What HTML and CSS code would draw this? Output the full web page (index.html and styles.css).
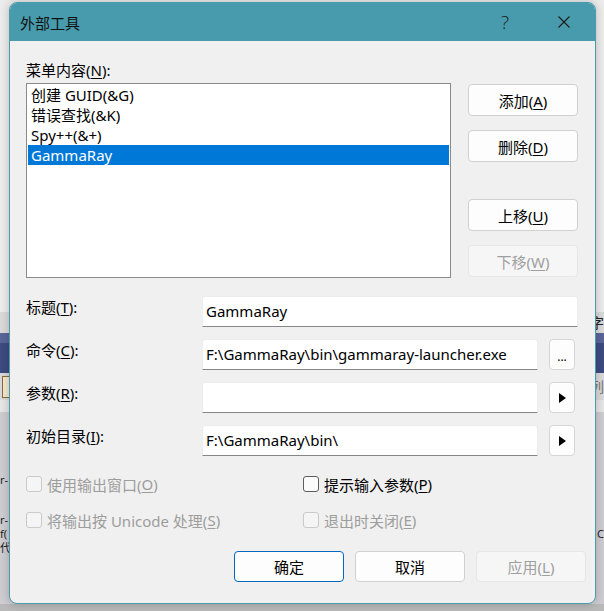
FILE: index.html
```html
<!DOCTYPE html>
<html>

<head>
	<meta charset="utf-8">
	<title>外部工具</title>
	<meta name="viewport" content="width=device-width, initial-scale=1">
	<link rel="stylesheet" href="styles.css">
</head>

<body>
	<!-- the IDE window behind the dialog -->
	<div class='desk'>
		<div class='band band--top'></div>
		<div class='band band--tab'><span></span><span class='frag'>字</span></div>
		<div class='band band--bar-light'></div>
		<div class='band band--bar'></div>
		<div class='band band--tool'><span class='icon'></span><span class='frag frag--grey'>列</span></div>
		<div class='band band--rule'></div>
		<div class='band band--code'>
			<div class='line line--wide'><span class='frag'>r-</span><span></span></div>
			<div class='line'><span class='frag'>r-</span><span></span></div>
			<div class='line'><span class='frag'>f(</span><span class='frag'>C</span></div>
			<div class='line'><span class='frag'>代</span><span></span></div>
		</div>
		<div class='band band--bottom'></div>
	</div>

	<div class='dialog'>
		<div class='titlebar'>
			<span class='titlebar__text'>外部工具</span>
			<span class='titlebar__help'>?</span>
			<span class='titlebar__close'>
				<svg width='12' height='12' viewBox='0 0 12 12'>
					<path d='M0.5 0.5 L11.5 11.5 M11.5 0.5 L0.5 11.5' stroke='#1b1b1b' stroke-width='1.1' fill='none' />
				</svg>
			</span>
		</div>

		<div class='dialog__body'>
			<div class='menu'>
				<div class='menu__main'>
					<p class='label'>菜单内容(<u>N</u>):</p>
					<ul class='list'>
						<li>创建 GUID(&amp;G)</li>
						<li>错误查找(&amp;K)</li>
						<li>Spy++(&amp;+)</li>
						<li class='is-selected'>GammaRay</li>
					</ul>
				</div>
				<div class='menu__side'>
					<button class='btn'>添加(<u>A</u>)</button>
					<button class='btn'>删除(<u>D</u>)</button>
					<button class='btn btn--gap'>上移(<u>U</u>)</button>
					<button class='btn' disabled>下移(<u>W</u>)</button>
				</div>
			</div>

			<div class='fields'>
				<div class='field'>
					<label class='field__label'>标题(<u>T</u>):</label>
					<div class='input'>GammaRay</div>
				</div>
				<div class='field'>
					<label class='field__label'>命令(<u>C</u>):</label>
					<div class='input'>F:\GammaRay\bin\gammaray-launcher.exe</div>
					<button class='mini mini--dots'>...</button>
				</div>
				<div class='field'>
					<label class='field__label'>参数(<u>R</u>):</label>
					<div class='input'></div>
					<button class='mini'>
						<svg width='7' height='10' viewBox='0 0 7 10'><polygon points='0,0 7,5 0,10' fill='#000' /></svg>
					</button>
				</div>
				<div class='field'>
					<label class='field__label'>初始目录(<u>I</u>):</label>
					<div class='input'>F:\GammaRay\bin\</div>
					<button class='mini'>
						<svg width='7' height='10' viewBox='0 0 7 10'><polygon points='0,0 7,5 0,10' fill='#000' /></svg>
					</button>
				</div>
			</div>

			<div class='checks'>
				<div class='check is-disabled'><span class='check__box'></span>使用输出窗口(<u>O</u>)</div>
				<div class='check'><span class='check__box'></span>提示输入参数(<u>P</u>)</div>
				<div class='check is-disabled'><span class='check__box'></span>将输出按 Unicode 处理(<u>S</u>)</div>
				<div class='check is-disabled'><span class='check__box'></span>退出时关闭(<u>E</u>)</div>
			</div>
		</div>

		<div class='dialog__footer'>
			<button class='btn btn--default'>确定</button>
			<button class='btn'>取消</button>
			<button class='btn' disabled>应用(<u>L</u>)</button>
		</div>
	</div>
</body>

</html>
```

FILE: styles.css
```css
/* page */

* {
	box-sizing: border-box;
}

html,
body {
	margin: 0;
	padding: 0;
}

body {
	position: relative;
	width: 604px;
	height: 611px;
	overflow: hidden;
	font-family: 'Noto Sans', 'Noto Sans CJK SC', sans-serif;
	font-size: 15px;
	color: #000;
	background: #ececec;
}

p,
ul {
	margin: 0;
	padding: 0;
}

u {
	text-decoration-thickness: 1px;
	text-underline-offset: 2px;
}

/* backdrop window */

.desk {
	display: flex;
	flex-direction: column;
	height: 611px;
}

.band {
	display: flex;
	justify-content: space-between;
	align-items: center;
	font-size: 14px;
	line-height: 1;
}

.band--top { height: 312px; background: #ececec; }
.band--tab { height: 21px; background: #dadada; }
.band--bar-light { height: 10px; background: #5a6699; }
.band--bar { height: 30px; background: #3c4b80; }
.band--tool { height: 27px; background: #d9d9d9; }
.band--rule { height: 12px; background: #e6e6e6; }
.band--bottom { height: 7px; background: #b9b9b9; }

.band--code {
	height: 192px;
	flex-direction: column;
	align-items: stretch;
	justify-content: flex-start;
	padding-top: 61px;
	font-size: 11px;
	background: #cdcdd1;
}

.line {
	display: flex;
	justify-content: space-between;
	height: 14px;
	line-height: 14px;
}

.line--wide {
	margin-bottom: 26px;
}

.frag {
	color: #222;
}

.frag--grey {
	color: #777;
}

.icon {
	width: 9px;
	height: 22px;
	margin-left: 2px;
	background: #f3e7cf;
	border: 1px solid #8a6a3a;
}

/* dialog */

.dialog {
	position: absolute;
	left: 9px;
	top: 2px;
	width: 587px;
	height: 602px;
	display: flex;
	flex-direction: column;
	background: #f0f0f0;
	border: 1px solid #4a9bae;
	border-radius: 8px;
	overflow: hidden;
	box-shadow: 0 0 10px rgba(0, 0, 0, 0.22);
}

.titlebar {
	display: flex;
	align-items: center;
	height: 38px;
	padding-left: 10px;
	background: #489bac;
	color: #111;
}

.titlebar__text {
	font-size: 15px;
}

.titlebar__help {
	margin-left: auto;
	width: 14px;
	font-family: 'Open Sans', sans-serif;
	font-size: 19px;
	font-weight: 300;
	color: #1b1b1b;
}

.titlebar__close {
	display: flex;
	margin: 0 25px 0 43px;
}

.dialog__body {
	padding: 19px 17px 0 16px;
}

/* menu list + side buttons */

.menu {
	display: flex;
}

.menu__main {
	width: 425px;
}

.label {
	line-height: 20px;
}

.list {
	list-style: none;
	height: 195px;
	margin-top: 3px;
	padding: 1px;
	background: #fff;
	border: 1px solid #8a8a8a;
}

.list li {
	height: 20px;
	line-height: 20px;
	padding-left: 3px;
	white-space: nowrap;
}

.list li.is-selected {
	background: #0078d7;
	color: #fff;
}

.menu__side {
	display: flex;
	flex-direction: column;
	gap: 14px;
	margin-left: auto;
	padding-top: 24px;
	width: 110px;
}

.btn {
	height: 32px;
	padding: 0;
	font-family: inherit;
	font-size: 15px;
	color: #000;
	background: #fdfdfd;
	border: 1px solid #d0d0d0;
	border-radius: 4px;
}

.btn--gap {
	margin-top: 23px;
}

.btn:disabled {
	color: #9f9f9f;
	background: #f6f6f6;
	border-color: #e6e6e6;
}

/* text fields */

.fields {
	display: flex;
	flex-direction: column;
	gap: 12px;
	margin-top: 18px;
}

.field {
	display: flex;
	align-items: flex-start;
	height: 31px;
}

.field__label {
	width: 176px;
	line-height: 22px;
}

.input {
	flex: 1;
	height: 31px;
	padding-left: 3px;
	line-height: 29px;
	white-space: nowrap;
	background: #fff;
	border: 1px solid #ececec;
	border-bottom-color: #868686;
	border-radius: 3px 3px 0 0;
}

.mini {
	display: flex;
	align-items: center;
	justify-content: center;
	width: 26px;
	height: 31px;
	margin: 0 3px 0 11px;
	padding: 0;
	font-family: inherit;
	background: #fdfdfd;
	border: 1px solid #d6d6d6;
	border-radius: 4px;
}

.mini--dots {
	align-items: flex-end;
	padding-bottom: 6px;
	font-size: 12px;
	line-height: 1;
	color: #000;
}

/* checkboxes */

.checks {
	display: grid;
	grid-template-columns: 277px 1fr;
	row-gap: 12px;
	margin-top: 16px;
}

.check {
	display: flex;
	align-items: center;
	height: 24px;
	white-space: nowrap;
}

.check__box {
	width: 16px;
	height: 16px;
	margin-right: 5px;
	background: #fbfbfb;
	border: 1px solid #5c5c5c;
	border-radius: 3px;
}

.check.is-disabled {
	color: #9d9d9d;
}

.check.is-disabled .check__box {
	background: #f5f5f5;
	border-color: #cacaca;
}

/* footer buttons */

.dialog__footer {
	display: flex;
	justify-content: flex-end;
	gap: 11px;
	margin-top: 19px;
	padding-right: 9px;
}

.dialog__footer .btn {
	width: 110px;
	height: 31px;
}

.btn--default {
	border-color: #0067c0;
}
```
